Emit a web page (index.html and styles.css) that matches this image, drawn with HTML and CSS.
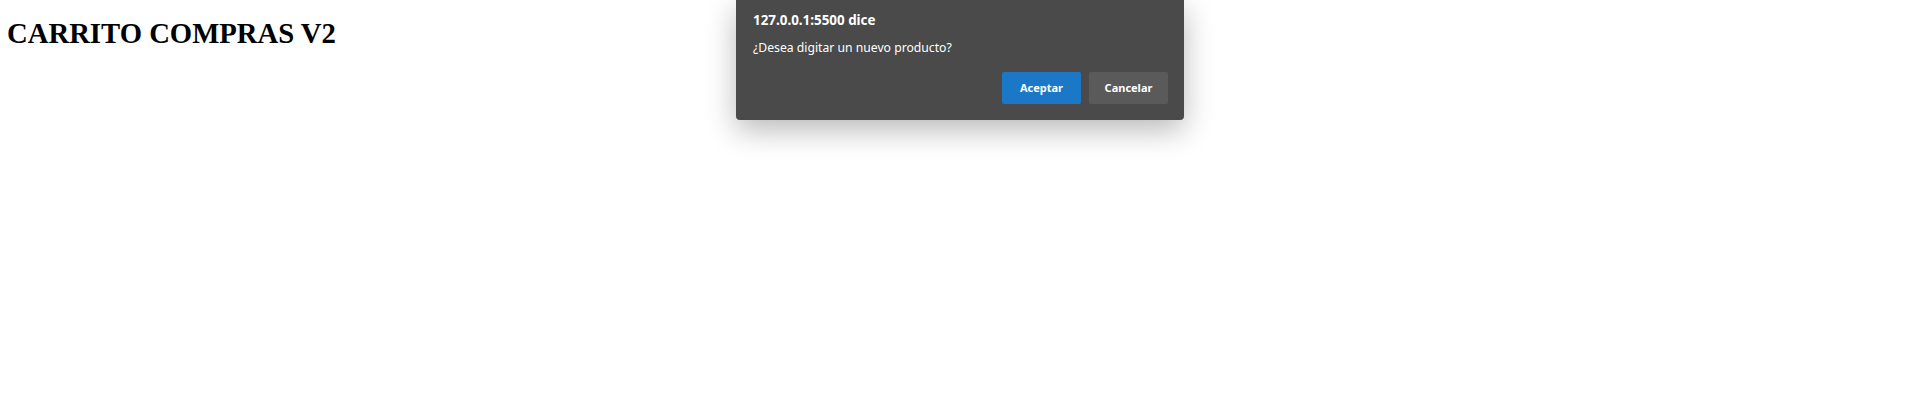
FILE: index.html
```html
<!DOCTYPE html>
<html lang="es">
<head>
<meta charset="utf-8">
<title>Carrito compras V2</title>
<link rel="stylesheet" href="styles.css">
</head>
<body>
<h1 class="page-title">CARRITO COMPRAS V2</h1>
<div class="dialog" role="dialog">
  <div class="dialog-title">127.0.0.1:5500 dice</div>
  <div class="dialog-message">¿Desea digitar un nuevo producto?</div>
  <div class="dialog-actions">
    <button class="btn btn-primary">Aceptar</button>
    <button class="btn btn-secondary">Cancelar</button>
  </div>
</div>
</body>
</html>
```
FILE: styles.css
```css
html, body {
  margin: 0;
  padding: 0;
  background: #ffffff;
}
body {
  width: 1920px;
  height: 419px;
  position: relative;
  overflow: hidden;
}
.page-title {
  font-family: "Liberation Serif", "Times New Roman", serif;
  font-weight: bold;
  font-size: 28.7px;
  line-height: 33px;
  margin: 17px 0 0 7px;
  color: #000;
}
.dialog {
  position: absolute;
  top: 0;
  left: 736px;
  width: 448px;
  height: 120px;
  box-sizing: border-box;
  padding: 11px 16px 16px 17px;
  background: #4a4a4a;
  border-radius: 0 0 4px 4px;
  box-shadow: 0 10px 30px rgba(0, 0, 0, 0.28);
  font-family: "Noto Sans", "Open Sans", sans-serif;
  color: #ffffff;
  display: flex;
  flex-direction: column;
}
.dialog-title {
  font-size: 13.4px;
  font-weight: bold;
  line-height: 18px;
}
.dialog-message {
  font-size: 12.2px;
  line-height: 18px;
  margin-top: 10px;
}
.dialog-actions {
  display: flex;
  justify-content: flex-end;
  gap: 8px;
  margin-top: auto;
}
.btn {
  width: 79px;
  height: 32px;
  border: none;
  border-radius: 2px;
  font-family: "Noto Sans", "Open Sans", sans-serif;
  font-size: 11px;
  font-weight: bold;
  color: #ffffff;
  padding: 0 0 2px 0;
}
.btn-primary {
  background: #1b78c6;
}
.btn-secondary {
  background: #5a5a5a;
}
```
